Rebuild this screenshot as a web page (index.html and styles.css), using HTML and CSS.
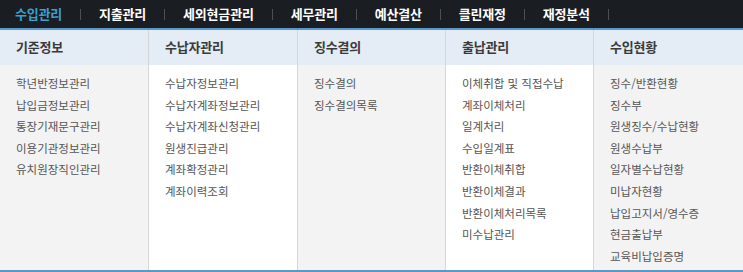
FILE: index.html
```html
<!DOCTYPE html>
<html lang="ko">
<head>
<meta charset="utf-8">
<link rel="stylesheet" href="styles.css">
</head>
<body>
<nav class="topnav">
  <a class="nav-item active">수입관리</a><span class="sep"></span>
  <a class="nav-item">지출관리</a><span class="sep"></span>
  <a class="nav-item">세외현금관리</a><span class="sep"></span>
  <a class="nav-item">세무관리</a><span class="sep"></span>
  <a class="nav-item">예산결산</a><span class="sep"></span>
  <a class="nav-item">클린재정</a><span class="sep"></span>
  <a class="nav-item">재정분석</a><span class="sep"></span>
</nav>
<div class="menu">
  <section class="col gray">
    <h3 class="col-head">기준정보</h3>
    <ul class="col-list">
      <li>학년반정보관리</li>
      <li>납입금정보관리</li>
      <li>통장기재문구관리</li>
      <li>이용기관정보관리</li>
      <li>유치원장직인관리</li>
    </ul>
  </section>
  <section class="col">
    <h3 class="col-head">수납자관리</h3>
    <ul class="col-list">
      <li>수납자정보관리</li>
      <li>수납자계좌정보관리</li>
      <li>수납자계좌신청관리</li>
      <li>원생진급관리</li>
      <li>계좌확정관리</li>
      <li>계좌이력조회</li>
    </ul>
  </section>
  <section class="col gray">
    <h3 class="col-head">징수결의</h3>
    <ul class="col-list">
      <li>징수결의</li>
      <li>징수결의목록</li>
    </ul>
  </section>
  <section class="col">
    <h3 class="col-head">출납관리</h3>
    <ul class="col-list">
      <li>이체취합 및 직접수납</li>
      <li>계좌이체처리</li>
      <li>일계처리</li>
      <li>수입일계표</li>
      <li>반환이체취합</li>
      <li>반환이체결과</li>
      <li>반환이체처리목록</li>
      <li>미수납관리</li>
    </ul>
  </section>
  <section class="col gray">
    <h3 class="col-head">수입현황</h3>
    <ul class="col-list">
      <li>징수/반환현황</li>
      <li>징수부</li>
      <li>원생징수/수납현황</li>
      <li>원생수납부</li>
      <li>일자별수납현황</li>
      <li>미납자현황</li>
      <li>납입고지서/영수증</li>
      <li>현금출납부</li>
      <li>교육비납입증명</li>
    </ul>
  </section>
</div>
</body>
</html>
```

FILE: styles.css
```css
* { box-sizing: border-box; }
html, body {
  margin: 0;
  padding: 0;
  width: 743px;
  height: 272px;
  overflow: hidden;
  background: #ffffff;
  font-family: "Noto Sans CJK KR", "Noto Sans", sans-serif;
}
.topnav {
  height: 30px;
  background: #1a1d22;
  border-bottom: 2px solid #5b98c6;
  display: flex;
  align-items: center;
  padding-left: 15px;
}
.nav-item {
  color: #ffffff;
  font-size: 13px;
  font-weight: 700;
  line-height: 28px;
  letter-spacing: -0.2px;
  white-space: nowrap;
}
.nav-item.active { color: #3b9fcf; }
.sep {
  width: 1px;
  height: 11px;
  background: #4a4f55;
  margin: 0 18px 0 18px;
}
.menu {
  display: grid;
  grid-template-columns: 148px 149px 148px 148px 150px;
  height: 242px;
  border-bottom: 2px solid #5b98c6;
}
.col {
  display: flex;
  flex-direction: column;
  background: #ffffff;
}
.col + .col { border-left: 1px solid #d6d6d6; }
.col.gray { background: #f3f3f3; }
.col-head {
  margin: 0;
  height: 35px;
  background: #e4ecf6;
  padding-left: 16px;
  font-size: 13px;
  font-weight: 700;
  color: #3a3a3a;
  line-height: 34px;
  letter-spacing: -0.2px;
}
.col-list {
  list-style: none;
  margin: 0;
  padding: 8px 0 0 16px;
}
.col-list li {
  font-size: 11.5px;
  line-height: 21.6px;
  color: #555555;
  white-space: nowrap;
}
```
